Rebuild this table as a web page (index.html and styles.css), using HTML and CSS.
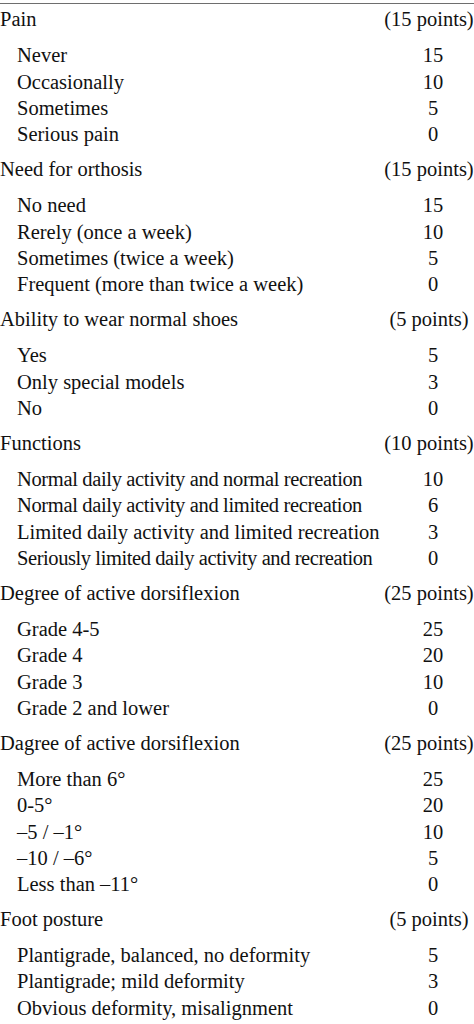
FILE: index.html
```html
<!DOCTYPE html>
<html lang="en">
<head>
<meta charset="utf-8">
<title>Scoring table</title>
<link rel="stylesheet" href="styles.css">
</head>
<body>
<div class="table">
  <section class="group">
    <div class="row head"><span class="label">Pain</span><span class="pts">(15 points)</span></div>
    <div class="row item"><span class="label">Never</span><span class="pts">15</span></div>
    <div class="row item"><span class="label">Occasionally</span><span class="pts">10</span></div>
    <div class="row item"><span class="label">Sometimes</span><span class="pts">5</span></div>
    <div class="row item"><span class="label">Serious pain</span><span class="pts">0</span></div>
  </section>
  <section class="group">
    <div class="row head"><span class="label">Need for orthosis</span><span class="pts">(15 points)</span></div>
    <div class="row item"><span class="label">No need</span><span class="pts">15</span></div>
    <div class="row item"><span class="label">Rerely (once a week)</span><span class="pts">10</span></div>
    <div class="row item"><span class="label">Sometimes (twice a week)</span><span class="pts">5</span></div>
    <div class="row item"><span class="label">Frequent (more than twice a week)</span><span class="pts">0</span></div>
  </section>
  <section class="group">
    <div class="row head"><span class="label">Ability to wear normal shoes</span><span class="pts">(5 points)</span></div>
    <div class="row item"><span class="label">Yes</span><span class="pts">5</span></div>
    <div class="row item"><span class="label">Only special models</span><span class="pts">3</span></div>
    <div class="row item"><span class="label">No</span><span class="pts">0</span></div>
  </section>
  <section class="group">
    <div class="row head"><span class="label">Functions</span><span class="pts">(10 points)</span></div>
    <div class="row item"><span class="label tight">Normal daily activity and normal recreation</span><span class="pts">10</span></div>
    <div class="row item"><span class="label tight">Normal daily activity and limited recreation</span><span class="pts">6</span></div>
    <div class="row item"><span class="label">Limited daily activity and limited recreation</span><span class="pts">3</span></div>
    <div class="row item"><span class="label tighter">Seriously limited daily activity and recreation</span><span class="pts">0</span></div>
  </section>
  <section class="group">
    <div class="row head"><span class="label">Degree of active dorsiflexion</span><span class="pts">(25 points)</span></div>
    <div class="row item"><span class="label">Grade 4-5</span><span class="pts">25</span></div>
    <div class="row item"><span class="label">Grade 4</span><span class="pts">20</span></div>
    <div class="row item"><span class="label">Grade 3</span><span class="pts">10</span></div>
    <div class="row item"><span class="label">Grade 2 and lower</span><span class="pts">0</span></div>
  </section>
  <section class="group">
    <div class="row head"><span class="label">Dagree of active dorsiflexion</span><span class="pts">(25 points)</span></div>
    <div class="row item"><span class="label">More than 6°</span><span class="pts">25</span></div>
    <div class="row item"><span class="label">0-5°</span><span class="pts">20</span></div>
    <div class="row item"><span class="label">–5 / –1°</span><span class="pts">10</span></div>
    <div class="row item"><span class="label">–10 / –6°</span><span class="pts">5</span></div>
    <div class="row item"><span class="label">Less than –11°</span><span class="pts">0</span></div>
  </section>
  <section class="group">
    <div class="row head"><span class="label">Foot posture</span><span class="pts">(5 points)</span></div>
    <div class="row item"><span class="label">Plantigrade, balanced, no deformity</span><span class="pts">5</span></div>
    <div class="row item"><span class="label">Plantigrade; mild deformity</span><span class="pts">3</span></div>
    <div class="row item"><span class="label">Obvious deformity, misalignment</span><span class="pts">0</span></div>
  </section>
</div>
</body>
</html>
```
FILE: styles.css
```css
html, body {
  margin: 0;
  padding: 0;
  background: #ffffff;
  overflow-x: hidden;
}

body {
  font-family: "Liberation Serif", "Times New Roman", serif;
  font-size: 20.5px;
  line-height: 26.3px;
  color: #111111;
}

.table {
  margin-top: 3px;
  border-top: 1px solid #6e6e6e;
  padding-top: 2.4px;
  width: 474px;
  overflow: hidden;
}

.group {
  display: flex;
  flex-direction: column;
  margin-bottom: 8.8px;
}

.row {
  display: grid;
  grid-template-columns: minmax(0, 1fr) 90px;
  white-space: nowrap;
}

.head {
  margin-bottom: 9.7px;
}

.item .label {
  padding-left: 17px;
}

.label.tight {
  letter-spacing: -0.35px;
}

.label.tighter {
  letter-spacing: -0.42px;
}

.pts {
  display: flex;
  justify-content: center;
}

.item .pts {
  margin-right: -8px;
}
```
